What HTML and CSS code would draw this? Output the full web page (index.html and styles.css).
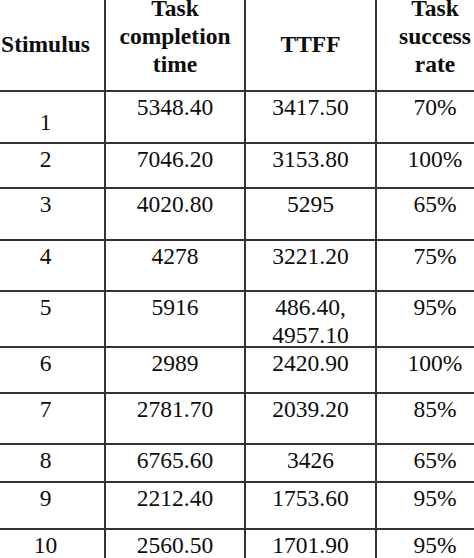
FILE: index.html
```html
<!DOCTYPE html>
<html>
<head>
<meta charset="utf-8">
<link rel="stylesheet" href="styles.css">
</head>
<body>
<div class="frame">
<table class="results">
  <colgroup>
    <col class="c1"><col class="c2"><col class="c3"><col class="c4">
  </colgroup>
  <thead>
    <tr class="rh">
      <th class="single">Stimulus</th>
      <th>Task<br>completion<br>time</th>
      <th class="single">TTFF</th>
      <th>Task<br>success<br>rate</th>
    </tr>
  </thead>
  <tbody>
    <tr class="r1"><td class="low">1</td><td>5348.40</td><td>3417.50</td><td>70%</td></tr>
    <tr class="r2"><td>2</td><td>7046.20</td><td>3153.80</td><td>100%</td></tr>
    <tr class="r3"><td>3</td><td>4020.80</td><td>5295</td><td>65%</td></tr>
    <tr class="r4"><td>4</td><td>4278</td><td>3221.20</td><td>75%</td></tr>
    <tr class="r5"><td>5</td><td>5916</td><td><div class="tight">486.40,<br>4957.10</div></td><td>95%</td></tr>
    <tr class="r6"><td>6</td><td>2989</td><td>2420.90</td><td>100%</td></tr>
    <tr class="r7"><td>7</td><td>2781.70</td><td>2039.20</td><td>85%</td></tr>
    <tr class="r8"><td>8</td><td>6765.60</td><td>3426</td><td>65%</td></tr>
    <tr class="r9"><td>9</td><td>2212.40</td><td>1753.60</td><td>95%</td></tr>
    <tr class="r10"><td>10</td><td>2560.50</td><td>1701.90</td><td>95%</td></tr>
  </tbody>
</table>
</div>
</body>
</html>
```

FILE: styles.css
```css
html, body {
  margin: 0;
  padding: 0;
  background: #ffffff;
}

.frame {
  width: 474px;
  height: 558px;
  overflow: hidden;
}

.results {
  margin: -8px 0 0 -13px;
  border-collapse: separate;
  border-spacing: 0;
  table-layout: fixed;
  width: 508px;
  font-family: "Liberation Serif", "Times New Roman", serif;
  font-size: 23.5px;
  line-height: 28px;
  color: #0d0d0d;
}

.c1 { width: 119px; }
.c2 { width: 140px; }
.c3 { width: 131px; }
.c4 { width: 118px; }

.results th,
.results td {
  box-sizing: border-box;
  padding: 1px 0 0 0;
  text-align: center;
  vertical-align: top;
  border-right: 2px solid #333333;
  border-bottom: 2px solid #333333;
  white-space: nowrap;
}

.results th {
  font-weight: bold;
  padding-top: 2px;
}

.results th.single {
  padding-top: 38px;
}

.results td.low {
  padding-top: 16px;
}

.tight {
  height: 50px;
  overflow: visible;
}

.rh th { height: 100px; }
.r1 td { height: 52px; }
.r2 td { height: 45px; }
.r3 td { height: 52px; }
.r4 td { height: 51px; }
.r5 td { height: 56px; }
.r6 td { height: 46px; }
.r7 td { height: 51px; }
.r8 td { height: 38px; }
.r9 td { height: 47px; }
.r10 td { height: 48px; }
```
